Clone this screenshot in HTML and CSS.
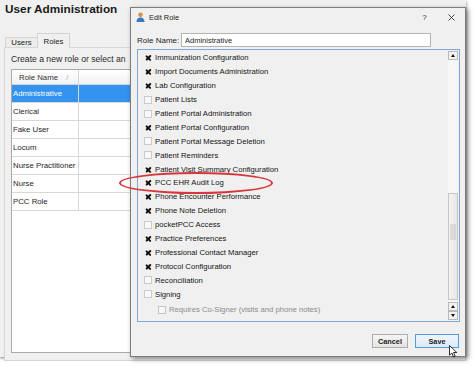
FILE: index.html
```html
<!DOCTYPE html>
<html lang="en">
<head>
  <meta charset="UTF-8" />
  <title>User Administration</title>
  <link rel="stylesheet" href="styles.css">
</head>
<body>
  <div class="app">
    <h1 class="app-title">User Administration</h1>
    <div class="tabs">
      <div class="tab">Users</div>
      <div class="tab active">Roles</div>
    </div>
    <div class="tab-panel">
      <p class="hint">Create a new role or select an</p>
      <div class="table-wrap">
        <table class="roles">
          <thead>
            <tr><th>Role Name <span class="sort">/</span></th><th></th></tr>
          </thead>
          <tbody>
            <tr class="selected"><td>Administrative</td><td></td></tr>
            <tr><td>Clerical</td><td></td></tr>
            <tr><td>Fake User</td><td></td></tr>
            <tr><td>Locum</td><td></td></tr>
            <tr><td>Nurse Practitioner</td><td></td></tr>
            <tr><td>Nurse</td><td></td></tr>
            <tr><td>PCC Role</td><td></td></tr>
          </tbody>
        </table>
      </div>
    </div>
  </div>

  <div class="dialog">
    <div class="dlg-titlebar">
      <svg class="dlg-icon" width="9" height="10" viewBox="0 0 9 10">
        <circle cx="4.5" cy="2.8" r="2.3" fill="#d9904a"/>
        <path d="M0.5 10 Q0.5 5.4 4.5 5.4 Q8.5 5.4 8.5 10 Z" fill="#3b78c4"/>
      </svg>
      <span class="dlg-title">Edit Role</span>
      <span class="tb-btn">?</span>
      <span class="tb-btn">
        <svg width="7" height="7" viewBox="0 0 7 7"><path d="M0.5 0.5L6.5 6.5M6.5 0.5L0.5 6.5" stroke="#333" stroke-width="0.9"/></svg>
      </span>
    </div>
    <div class="dlg-body">
      <div class="name-row">
        <label class="name-label">Role Name:</label>
        <input class="name-input" type="text" value="Administrative" readonly>
      </div>
      <div class="perm-box">
        <ul class="perms">
          <li><span class="box on"></span>Immunization Configuration</li>
          <li><span class="box on"></span>Import Documents Administration</li>
          <li><span class="box on"></span>Lab Configuration</li>
          <li><span class="box"></span>Patient Lists</li>
          <li><span class="box"></span>Patient Portal Administration</li>
          <li><span class="box on"></span>Patient Portal Configuration</li>
          <li><span class="box"></span>Patient Portal Message Deletion</li>
          <li><span class="box"></span>Patient Reminders</li>
          <li><span class="box on"></span>Patient Visit Summary Configuration</li>
          <li><span class="box on"></span>PCC EHR Audit Log</li>
          <li><span class="box on"></span>Phone Encounter Performance</li>
          <li><span class="box on"></span>Phone Note Deletion</li>
          <li><span class="box"></span>pocketPCC Access</li>
          <li><span class="box on"></span>Practice Preferences</li>
          <li><span class="box on"></span>Professional Contact Manager</li>
          <li><span class="box on"></span>Protocol Configuration</li>
          <li><span class="box"></span>Reconciliation</li>
          <li><span class="box"></span>Signing</li>
          <li class="sub"><span class="box"></span>Requires Co-Signer (visits and phone notes)</li>
        </ul>
        <div class="scroll">
          <div class="sb-btn up"></div>
          <div class="sb-track">
            <div class="sb-thumb"><span class="grip"></span></div>
          </div>
          <div class="sb-btn up"></div>
          <div class="sb-btn down"></div>
        </div>
      </div>
      <div class="dlg-buttons">
        <button class="btn">Cancel</button>
        <button class="btn primary">Save</button>
      </div>
    </div>
  </div>

  <!-- annotation drawn over the screenshot -->
  <div class="callout"></div>

  <svg class="cursor" width="9" height="13" viewBox="0 0 9 13">
    <path d="M0.5 0.5 L0.5 10.2 L2.9 8 L4.6 12 L6.2 11.3 L4.5 7.5 L7.8 7.5 Z" fill="#fff" stroke="#000" stroke-width="0.8"/>
  </svg>
</body>
</html>
```

FILE: styles.css
```css
body {
  margin: 0;
  width: 474px;
  height: 366px;
  overflow: hidden;
  position: relative;
  background: #fff;
  font-family: 'Liberation Sans', Arial, sans-serif;
  font-size: 7.8px;
  color: #1e1e1e;
}

.app {
  width: 466px;
  height: 357px;
  background: #f0f0f0;
  box-shadow: 0 1px 3px rgba(0, 0, 0, 0.55);
}

.app-title {
  margin: 0 0 17px;
  padding: 2px 0 0 5px;
  font-size: 11.8px;
  line-height: 14px;
  font-weight: bold;
  color: #1a1a1a;
}

.tabs {
  display: flex;
  align-items: flex-end;
  height: 15px;
  margin: 0 0 -1px 5px;
}

.tab {
  width: 31px;
  height: 10px;
  line-height: 10px;
  text-align: center;
  border: 1px solid #d4d4d4;
  border-bottom: none;
  background: #ececec;
  color: #222;
}

.tab.active {
  position: relative;
  z-index: 2;
  height: 14px;
  line-height: 15px;
  margin-left: -1px;
  background: #f0f0f0;
}

.tab-panel {
  position: relative;
  z-index: 1;
  margin-left: 4px;
  height: 306px;
  padding: 5px 0 1px 6px;
  border: 1px solid #d6d6d6;
  background: #f0f0f0;
}

.hint {
  margin: 0 0 3px;
  font-size: 8.6px;
  line-height: 13px;
  white-space: nowrap;
  color: #2a2a2a;
}

.table-wrap {
  width: 300px;
  height: 282px;
  border: 1px solid #a9a9a9;
  background: #fff;
}

.roles {
  border-collapse: collapse;
  width: 100%;
}

.roles th {
  height: 14px;
  padding: 0 0 0 7px;
  text-align: left;
  font-weight: normal;
  color: #333;
  background: linear-gradient(#ffffff, #f1f1f1);
  border-bottom: 1px solid #d5d5d5;
  border-right: 1px solid #d5d5d5;
}

.roles th:first-child {
  width: 59px;
}

.roles .sort {
  margin-left: 6px;
  color: #b0b0b0;
}

.roles td {
  height: 17px;
  padding: 0 0 0 1px;
  border-bottom: 1px solid #d8d8d8;
  border-right: 1px solid #d8d8d8;
  white-space: nowrap;
}

.roles tr.selected td {
  background: #3393ef;
  color: #fff;
}

/* dialog */

.dialog {
  position: absolute;
  z-index: 5;
  left: 130px;
  top: 7px;
  width: 334px;
  height: 348px;
  border: 1px solid #7c7c7c;
  background: #f0f0f0;
  box-shadow: 2px 2px 5px rgba(0, 0, 0, 0.45);
  display: flex;
  flex-direction: column;
}

.dlg-titlebar {
  height: 19px;
  display: flex;
  align-items: center;
  padding-left: 5px;
}

.dlg-icon {
  margin-top: -1px;
}

.dlg-title {
  flex: 1;
  margin-left: 4px;
  font-size: 7.4px;
  color: #222;
}

.tb-btn {
  width: 27px;
  text-align: center;
  font-size: 8px;
  color: #333;
  display: flex;
  justify-content: center;
}

.dlg-body {
  flex: 1;
  padding: 6px 5px 0 6px;
  display: flex;
  flex-direction: column;
}

.name-row {
  display: flex;
  align-items: center;
  height: 14px;
}

.name-label {
  width: 44px;
  font-size: 8px;
}

.name-input {
  box-sizing: border-box;
  width: 250px;
  height: 14px;
  margin: 0;
  padding: 0 3px;
  border: 1px solid #b4b4b4;
  background: #fff;
  font-family: inherit;
  font-size: 7.5px;
  color: #1e1e1e;
  outline: none;
}

.perm-box {
  margin-top: 2px;
  height: 271px;
  border: 1px solid #80a8d8;
  display: flex;
}

.perms {
  flex: 1;
  list-style: none;
  margin: 0;
  padding: 1px 0 0 6px;
}

.perms li {
  height: 13.9px;
  display: flex;
  align-items: center;
  white-space: nowrap;
  font-size: 7.7px;
  color: #151515;
}

.perms li.sub {
  height: 15px;
  margin-top: 1px;
  padding-left: 14px;
  color: #8c8c8c;
}

.box {
  position: relative;
  width: 8px;
  height: 8px;
  box-sizing: border-box;
  margin-right: 3px;
  border: 1px solid #cbcbcb;
  background: #f8f8f8;
}

.box.on {
  border-color: transparent;
  background: transparent;
}

.box.on::before,
.box.on::after {
  content: "";
  position: absolute;
  left: 0;
  top: 2.5px;
  width: 6.5px;
  height: 1.8px;
  border-radius: 1px;
  background: #111;
  transform: rotate(45deg);
}

.box.on::after {
  transform: rotate(-45deg);
}

.perms li.sub .box {
  border-color: #c4c4c4;
}

.scroll {
  width: 10px;
  margin: 1px 1px 1px 0;
  display: flex;
  flex-direction: column;
}

.sb-btn {
  position: relative;
  height: 9px;
  box-sizing: border-box;
  border: 1px solid #b9b9b9;
  background: #f3f3f3;
}

.sb-btn::after {
  content: "";
  position: absolute;
  left: 2px;
  top: 2px;
  border-left: 2px solid transparent;
  border-right: 2px solid transparent;
}

.sb-btn.up::after {
  border-bottom: 3px solid #111;
}

.sb-btn.down::after {
  border-top: 3px solid #111;
}

.sb-track {
  flex: 1;
  background: #f7f7f7;
  display: flex;
  flex-direction: column;
  justify-content: flex-end;
}

.sb-thumb {
  height: 107px;
  margin-bottom: 2px;
  padding-bottom: 30px;
  box-sizing: border-box;
  border: 1px solid #c6c6c6;
  background: linear-gradient(90deg, #f3f3f3, #e6e6e6);
  display: flex;
  justify-content: center;
  align-items: center;
}

.grip {
  width: 6px;
  height: 16px;
  background: radial-gradient(circle, #c2c2c2 0.6px, transparent 0.8px) 0 0 / 2px 2px;
}

.dlg-buttons {
  margin-top: 12px;
  display: flex;
  justify-content: flex-end;
  gap: 7px;
  padding-right: 1px;
}

.btn {
  height: 14px;
  padding: 0;
  border: 1px solid #adadad;
  background: linear-gradient(#f6f6f6, #e4e4e4);
  font-family: inherit;
  font-size: 7.3px;
  font-weight: bold;
  color: #222;
  width: 36px;
}

.btn.primary {
  width: 44px;
  border-color: #5a9ad6;
  background: linear-gradient(#eef6fd, #dcebf9);
}

.callout {
  position: absolute;
  z-index: 6;
  left: 119px;
  top: 172px;
  width: 150px;
  height: 18px;
  border: 2px solid #d8363d;
  border-radius: 50%;
}

.cursor {
  position: absolute;
  z-index: 7;
  left: 449px;
  top: 345px;
}
```
